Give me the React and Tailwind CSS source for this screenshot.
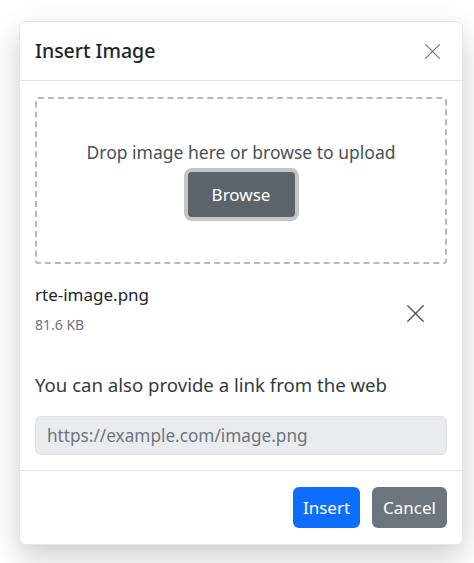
import React from "react";

const CloseIcon = ({ size = 18 }) => (
  <svg width={size} height={size} viewBox="0 0 16 16" fill="none" stroke="currentColor" strokeWidth="1.1" strokeLinecap="round">
    <path d="M1.5 1.5l13 13M14.5 1.5l-13 13" />
  </svg>
);

const InsertImageModal = () => {
  return (
    <div
      className="min-h-[563px] w-[474px] bg-white pt-[21px] pl-[19px]"
      style={{ fontFamily: '"Noto Sans", "Open Sans", sans-serif' }}
    >
      <div className="w-[444px] h-[524px] bg-white rounded-[7px] border border-[#e6e6e6] shadow-[0_12px_30px_rgba(0,0,0,0.2)] flex flex-col">
        {/* header */}
        <div className="h-[59px] flex items-center justify-between px-[15px] border-b border-[#dee2e6]">
          <h2 className="text-[19.5px] font-medium text-[#212529] leading-none">Insert Image</h2>
          <button className="text-[#6c757d] mr-[6px]">
            <CloseIcon size={17} />
          </button>
        </div>

        {/* body */}
        <div className="flex-1 px-[15px] pt-[16px]">
          <div className="h-[167px] border-2 border-dashed border-[#b5b9bd] rounded-[3px] flex flex-col items-center pt-[41px]">
            <p className="text-[17.5px] text-[#495057] leading-[24px]">Drop image here or browse to upload</p>
            <button className="mt-[4px] w-[115px] h-[53px] rounded-[8px] border-[4px] border-[#c3c6c9] bg-[#5c636a] text-white text-[17px]">
              Browse
            </button>
          </div>

          <div className="flex items-center justify-between mt-[19px]">
            <div>
              <div className="text-[17px] text-[#212529] leading-[24px]">rte-image.png</div>
              <div className="text-[14px] text-[#6c757d] leading-[20px] mt-[8px]">81.6 KB</div>
            </div>
            <button className="text-[#495057] mr-[22px] mt-[8px]">
              <CloseIcon size={19} />
            </button>
          </div>

          <p className="mt-[38px] text-[18.6px] text-[#343a40] leading-[24px]">You can also provide a link from the web</p>

          <div className="mt-[19px] h-[39px] rounded-[6px] border border-[#dee2e6] bg-[#e9ecef] flex items-center px-[11px]">
            <span className="text-[17.2px] text-[#6c757d]">https://example.com/image.png</span>
          </div>
        </div>

        {/* footer */}
        <div className="h-[74px] border-t border-[#dee2e6] flex items-center justify-end gap-[12px] px-[15px]">
          <button className="h-[41px] w-[67px] rounded-[6px] bg-[#0d6efd] text-white text-[17px]">Insert</button>
          <button className="h-[41px] w-[75px] rounded-[6px] bg-[#6c757d] text-white text-[17px]">Cancel</button>
        </div>
      </div>
    </div>
  );
};

export default function App() {
  return <InsertImageModal />;
}
